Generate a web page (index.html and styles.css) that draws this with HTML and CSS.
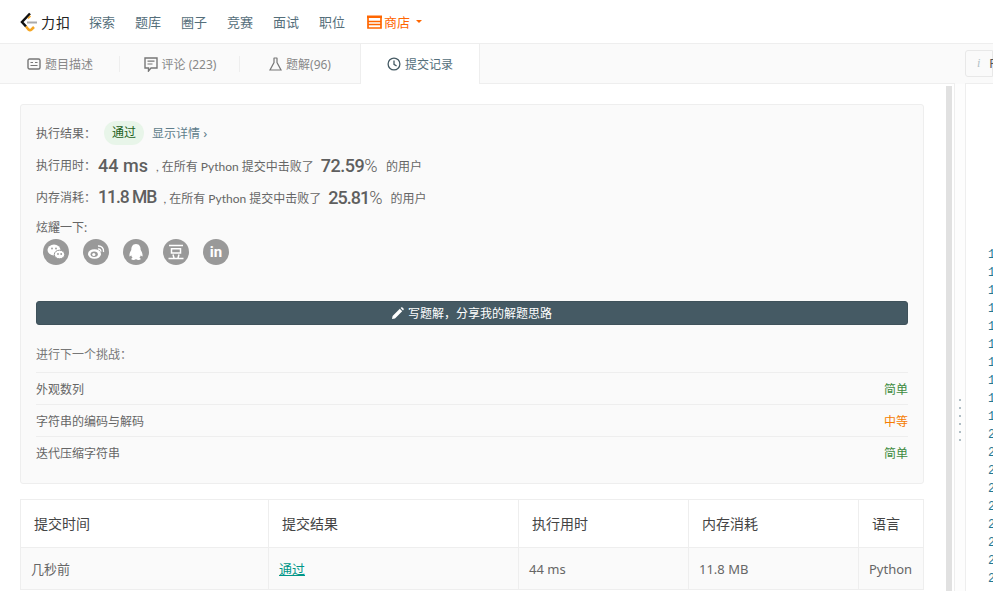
FILE: index.html
```html
<!DOCTYPE html>
<html lang="zh-CN">
<head>
    <meta charset="UTF-8">
    <meta name="viewport" content="width=device-width, initial-scale=1.0">
    <title>提交记录 - 力扣</title>
    <link rel="stylesheet" href="styles.css">
</head>
<body>

<header class="top-nav">
    <a class="logo">
        <svg class="logo-mark" width="18" height="20" viewBox="0 0 18 20">
            <path d="M10 1.5 L2 10 L6 14.5" fill="none" stroke="#111" stroke-width="2.5"/>
            <path d="M6 14.5 L8.5 17.5 Q10 18.8 11.5 17.5 L14 15" fill="none" stroke="#f5a623" stroke-width="2.5"/>
            <path d="M7 10.5 H17" stroke="#aaa" stroke-width="2"/>
            <path d="M8 6.5 L10.5 4" stroke="#f5a623" stroke-width="1.6"/>
        </svg>
        <span class="logo-text">力扣</span>
    </a>
    <nav class="nav-links">
        <a>探索</a>
        <a>题库</a>
        <a>圈子</a>
        <a>竞赛</a>
        <a>面试</a>
        <a>职位</a>
    </nav>
    <a class="nav-store">
        <svg width="15" height="14" viewBox="0 0 15 14">
            <path d="M0 .5 H15 V3 H0 Z" fill="#f60"/>
            <path d="M1 2 V13 H14 V2 M1 6.5 H14 M1 9.5 H14" fill="none" stroke="#f60" stroke-width="1.7"/>
        </svg>
        商店
        <i class="caret"></i>
    </a>
</header>

<div class="workspace">
    <section class="left-pane">
        <div class="tabs">
            <a class="tab">
                <svg width="14" height="12" viewBox="0 0 14 12">
                    <rect x="1" y="1" width="12" height="10" rx="1.5" fill="none" stroke="#777" stroke-width="1.4"/>
                    <path d="M3.5 4.5 H6 M3.5 7.5 H10.5 M8 4.5 H10.5" stroke="#777" stroke-width="1.2"/>
                </svg>
                题目描述
            </a>
            <a class="tab">
                <svg width="14" height="15" viewBox="0 0 14 15">
                    <path d="M1 1 H13 V11 H7 L4.5 14 V11 H1 Z" fill="none" stroke="#777" stroke-width="1.4"/>
                    <path d="M3.5 4.2 H10.5 M3.5 7 H8.5" stroke="#777" stroke-width="1.2"/>
                </svg>
                评论 (223)
            </a>
            <a class="tab">
                <svg width="13" height="14" viewBox="0 0 13 14">
                    <path d="M4.7 1 H8.3 M5 1 V5.5 L1 13 H12 L8 5.5 V1" fill="none" stroke="#777" stroke-width="1.2"/>
                </svg>
                题解(96)
            </a>
            <a class="tab tab-active">
                <svg width="14" height="14" viewBox="0 0 14 14">
                    <circle cx="7" cy="7" r="5.9" fill="none" stroke="#455a64" stroke-width="1.3"/>
                    <path d="M7 3.5 V7.3 L9.6 9" fill="none" stroke="#455a64" stroke-width="1.3"/>
                </svg>
                提交记录
            </a>
        </div>

        <div class="pane-body">
            <div class="pane-scroll">
                <div class="result-card">
                    <div class="result-row">
                        <span class="label">执行结果：</span>
                        <span class="pill">通过</span>
                        <a class="details">显示详情 <span class="details-arrow">›</span></a>
                    </div>
                    <div class="stat-row">
                        <span class="label">执行用时：</span>
                        <b class="stat-num">44 ms</b>
                        <span class="stat-text">, 在所有 Python 提交中击败了</span>
                        <b class="stat-pct">72.59<span class="pct-sign">%</span></b>
                        <span class="stat-text stat-end">的用户</span>
                    </div>
                    <div class="stat-row">
                        <span class="label">内存消耗：</span>
                        <b class="stat-num stat-num-thin">11.8 MB</b>
                        <span class="stat-text">, 在所有 Python 提交中击败了</span>
                        <b class="stat-pct stat-pct-thin">25.81<span class="pct-sign">%</span></b>
                        <span class="stat-text stat-end">的用户</span>
                    </div>
                    <div class="share-label">炫耀一下:</div>
                    <div class="share-icons">
                        <a class="share-icon">
                            <svg width="18" height="16" viewBox="0 0 18 16" fill="#fff">
                                <ellipse cx="7" cy="6" rx="6.5" ry="5.4"/>
                                <ellipse cx="12.5" cy="10.5" rx="5.2" ry="4.3" stroke="#999" stroke-width="1"/>
                                <circle cx="11" cy="10" r=".9" fill="#999"/>
                                <circle cx="14.2" cy="10" r=".9" fill="#999"/>
                                <circle cx="5" cy="4.5" r=".9" fill="#999"/>
                                <circle cx="9" cy="4.5" r=".9" fill="#999"/>
                            </svg>
                        </a>
                        <a class="share-icon">
                            <svg width="18" height="16" viewBox="0 0 18 16">
                                <ellipse cx="7.5" cy="10" rx="6.5" ry="4.8" fill="#fff"/>
                                <ellipse cx="7.2" cy="10.3" rx="3.6" ry="2.7" fill="#999"/>
                                <circle cx="6.8" cy="10.5" r="1.6" fill="#fff"/>
                                <path d="M11 2 A5 5 0 0 1 16.5 8 M11 5 A2.3 2.3 0 0 1 13.8 7.6" fill="none" stroke="#fff" stroke-width="1.4"/>
                            </svg>
                        </a>
                        <a class="share-icon">
                            <svg width="16" height="17" viewBox="0 0 16 17" fill="#fff">
                                <path d="M8 0 C4.5 0 3.3 3 3.3 6 C2 8 1 10.5 1.6 12.5 C2.3 12.5 2.8 12 3.2 11.3 C3.5 12.5 4 13.2 4.6 13.8 C3.4 14.2 3 15 3.6 15.6 C4.6 16.3 7 16 8 15 C9 16 11.4 16.3 12.4 15.6 C13 15 12.6 14.2 11.4 13.8 C12 13.2 12.5 12.5 12.8 11.3 C13.2 12 13.7 12.5 14.4 12.5 C15 10.5 14 8 12.7 6 C12.7 3 11.5 0 8 0 Z"/>
                            </svg>
                        </a>
                        <a class="share-icon">
                            <svg width="16" height="16" viewBox="0 0 16 16" fill="none" stroke="#fff" stroke-width="1.5">
                                <path d="M1 1.5 H15 M3.5 4.8 H12.5 V9 H3.5 Z M5 10.5 L6 14 M11 10.5 L10 14 M0.5 14.5 H15.5"/>
                            </svg>
                        </a>
                        <a class="share-icon share-in">in</a>
                    </div>
                    <a class="solution-btn">
                        <svg width="12" height="12" viewBox="0 0 12 12" fill="#fff">
                            <path d="M0 12 L0.6 9 L7.8 1.8 L10.2 4.2 L3 11.4 Z M8.6 1 L9.4 .3 Q9.8 0 10.2 .3 L11.7 1.8 Q12 2.2 11.7 2.6 L11 3.4 Z"/>
                        </svg>
                        写题解，分享我的解题思路
                    </a>
                    <div class="next-title">进行下一个挑战：</div>
                    <div class="next-row"><span>外观数列</span><span class="easy">简单</span></div>
                    <div class="next-row"><span>字符串的编码与解码</span><span class="medium">中等</span></div>
                    <div class="next-row"><span>迭代压缩字符串</span><span class="easy">简单</span></div>
                </div>

                <table class="history">
                    <thead>
                        <tr>
                            <th class="col-time">提交时间</th>
                            <th class="col-result">提交结果</th>
                            <th class="col-run">执行用时</th>
                            <th class="col-mem">内存消耗</th>
                            <th class="col-lang">语言</th>
                        </tr>
                    </thead>
                    <tbody>
                        <tr>
                            <td>几秒前</td>
                            <td><a class="accepted">通过</a></td>
                            <td>44 ms</td>
                            <td>11.8 MB</td>
                            <td>Python</td>
                        </tr>
                    </tbody>
                </table>
            </div>
            <div class="scrollbar"></div>
        </div>
    </section>

    <div class="gutter">
        <div class="gutter-top"></div>
        <div class="gutter-dots">
            <i></i><i></i><i></i><i></i><i></i><i></i>
        </div>
    </div>

    <section class="right-pane">
        <div class="lang-bar">
            <div class="lang-box"><i class="info">i</i><span>P</span></div>
        </div>
        <div class="editor">
            <div>10</div><div>11</div><div>12</div><div>13</div><div>14</div>
            <div>15</div><div>16</div><div>17</div><div>18</div><div>19</div>
            <div>20</div><div>21</div><div>22</div><div>23</div><div>24</div>
            <div>25</div><div>26</div><div>27</div><div>28</div>
        </div>
    </section>
</div>

</body>
</html>
```

FILE: styles.css
```css
* {
    box-sizing: border-box;
}
html, body {
    height: 100%;
    overflow: hidden;
}
body {
    margin: 0;
    font-family: "Noto Sans", "Noto Sans CJK SC", sans-serif;
    font-size: 13px;
    color: #666;
    background-color: #fff;
}
.top-nav {
    display: flex;
    align-items: center;
    height: 44px;
    padding-left: 20px;
    border-bottom: 1px solid #eee;
}
.logo {
    display: flex;
    align-items: center;
    width: 69px;
}
.logo-mark {
    flex: none;
}
.logo-text {
    margin-left: 3px;
    font-size: 14px;
    letter-spacing: 1px;
    color: #222;
}
.nav-links {
    display: flex;
    gap: 20px;
}
.nav-links a {
    color: #546e7a;
    font-size: 13px;
}
.nav-store {
    display: flex;
    align-items: center;
    gap: 2px;
    margin-left: 22px;
    color: #f60;
    font-size: 13px;
}
.caret {
    margin-left: 4px;
    border-left: 3px solid transparent;
    border-right: 3px solid transparent;
    border-top: 3px solid #f60;
}
.workspace {
    display: flex;
    height: 547px;
}
.left-pane {
    flex: none;
    width: 955px;
    display: flex;
    flex-direction: column;
}
.tabs {
    display: flex;
    flex: none;
    height: 40px;
    background-color: #fafafa;
    border-bottom: 1px solid #eee;
}
.tab {
    position: relative;
    display: flex;
    align-items: center;
    justify-content: center;
    gap: 4px;
    width: 120px;
    height: 40px;
    font-size: 12px;
    color: #888;
}
.tab:nth-child(-n+2)::after {
    content: "";
    position: absolute;
    right: 0;
    top: 12px;
    height: 16px;
    border-right: 1px solid #eee;
}
.tab-active {
    background-color: #fff;
    color: #546e7a;
    border-left: 1px solid #eee;
    border-right: 1px solid #eee;
}
.pane-body {
    flex: 1;
    display: flex;
    border-right: 1px solid #eee;
    min-height: 0;
}
.pane-scroll {
    flex: 1;
    padding: 20px 22px 0 20px;
    overflow: hidden;
}
.scrollbar {
    flex: none;
    width: 6px;
    margin: 2px 2px 0 0;
    background-color: #e1e1e1;
}
.result-card {
    height: 380px;
    padding: 16px 15px 0;
    background-color: #fafafa;
    border: 1px solid #eee;
    border-radius: 3px;
}
.label {
    color: #666;
    font-size: 12px;
}
.result-row {
    display: flex;
    align-items: center;
    height: 24px;
}
.pill {
    width: 40px;
    height: 24px;
    margin-left: 8px;
    line-height: 24px;
    text-align: center;
    border-radius: 12px;
    font-size: 12px;
    color: #1b5e20;
    background-color: #e8f5e9;
}
.details {
    margin-left: 8px;
    font-size: 12px;
    color: #607d8b;
}
.details-arrow {
    font-size: 13px;
}
.stat-row {
    display: flex;
    align-items: center;
    height: 24px;
    margin-top: 8px;
    white-space: pre;
}
.stat-num {
    margin-left: 2px;
    font-family: Roboto, sans-serif;
    font-size: 18px;
    font-weight: 500;
    color: #5f5f5f;
}
.stat-num-thin {
    font-size: 17.5px;
    letter-spacing: -1px;
    margin-right: -1px;
}
.stat-text {
    margin-left: 8px;
    font-family: Lato, "Noto Sans CJK SC", sans-serif;
    font-size: 12px;
    color: #666;
}
.stat-pct {
    margin-left: 7px;
    font-family: Roboto, sans-serif;
    font-size: 18px;
    font-weight: 500;
    letter-spacing: -0.5px;
    color: #5f5f5f;
}
.stat-pct-thin {
    letter-spacing: -1px;
}
.pct-sign {
    font-weight: 300;
}
.stat-end {
    margin-left: 9px;
}
.share-label {
    margin-top: 10px;
    font-size: 12px;
    line-height: 17px;
    color: #666;
}
.share-icons {
    display: flex;
    gap: 14px;
    padding-left: 7px;
    margin-top: 3px;
}
.share-icon {
    display: flex;
    align-items: center;
    justify-content: center;
    width: 26px;
    height: 26px;
    border-radius: 50%;
    background-color: #999;
}
.share-in {
    color: #fff;
    font-family: Roboto, sans-serif;
    font-size: 15px;
    font-weight: 700;
}
.solution-btn {
    display: flex;
    align-items: center;
    justify-content: center;
    gap: 4px;
    height: 24px;
    margin-top: 36px;
    border: 1px solid #3f525b;
    border-radius: 3px;
    color: #fff;
    font-size: 12px;
    background-color: #455a64;
}
.next-title {
    margin-top: 21px;
    font-size: 12px;
    line-height: 17px;
    color: #777;
    padding-bottom: 9px;
}
.next-row {
    display: flex;
    justify-content: space-between;
    align-items: center;
    height: 32px;
    border-top: 1px solid #eee;
    font-size: 12px;
    color: #666;
}
.easy {
    color: #3d8b40;
}
.medium {
    color: #f57c00;
}
.history {
    width: 904px;
    margin-top: 15px;
    border-collapse: collapse;
    table-layout: fixed;
    background-color: #fff;
}
.history th, .history td {
    border: 1px solid #eee;
}
.history th {
    height: 48px;
    padding: 0 13px 2px;
    text-align: left;
    font-size: 14px;
    font-weight: 400;
    color: #444;
}
.history td {
    height: 42px;
    padding: 0 10px;
    font-size: 13px;
    color: #666;
    background-color: #fafafa;
}
.col-time {
    width: 248px;
}
.col-result {
    width: 250px;
}
.col-run {
    width: 170px;
}
.col-mem {
    width: 170px;
}
.accepted {
    color: #009688;
    text-decoration: underline;
}
.gutter {
    flex: none;
    width: 10px;
    background-color: #fdfdfd;
}
.gutter-top {
    height: 40px;
    background-color: #fafafa;
}
.gutter-dots {
    display: flex;
    flex-direction: column;
    align-items: center;
    gap: 6px;
    padding-top: 315px;
}
.gutter-dots i {
    width: 2px;
    height: 2px;
    background-color: #b0bec5;
}
.right-pane {
    flex: 1;
    min-width: 0;
    display: flex;
    flex-direction: column;
    background-color: #fff;
}
.lang-bar {
    flex: none;
    height: 40px;
    padding-top: 6px;
    background-color: #fafafa;
    border-bottom: 1px solid #eee;
}
.lang-box {
    display: flex;
    align-items: center;
    gap: 9px;
    height: 27px;
    padding-left: 11px;
    font-size: 12px;
    color: #555;
    background-color: #fafafa;
    border: 1px solid #e8e8e8;
    border-radius: 3px 0 0 3px;
}
.info {
    font-family: "Liberation Serif", serif;
    color: #b0bec5;
}
.editor {
    flex: 1;
    padding: 162px 0 0 22px;
    border-left: 1px solid #eee;
    font-family: "Liberation Mono", monospace;
    font-size: 12px;
    line-height: 18px;
    color: #237893;
    overflow: hidden;
}
```
